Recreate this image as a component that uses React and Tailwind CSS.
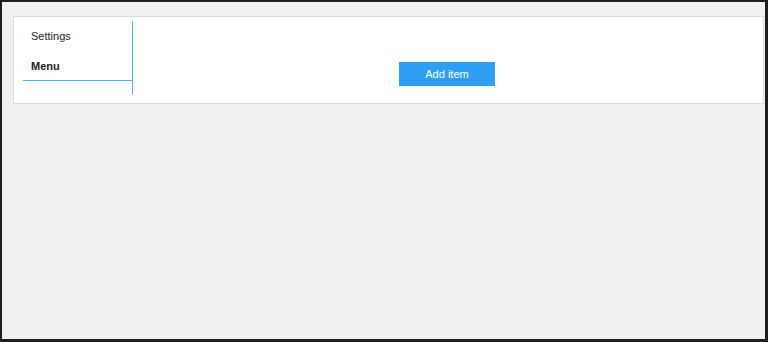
export default function App() {
  return (
    <div
      className="w-[768px] h-[342px] bg-[#f0f0f0] border-l-2 border-t-2 border-r-[3px] border-b-[3px] border-[#1e1e1e] pl-[11px] pt-[14px] pr-px text-[#222] text-[11px]"
      style={{ fontFamily: '"Liberation Sans", Arial, sans-serif' }}
    >
      {/* panel */}
      <div className="h-[88px] bg-white border border-[#dcdcdc] flex pl-[9px] pt-[4px]">
        {/* sidebar */}
        <div className="w-[110px] h-[73px] border-r border-[#4ab2ff] flex flex-col">
          <div className="h-[30px] pl-[8px] flex items-center pt-[1px]">Settings</div>
          <div className="h-[30px] pl-[8px] flex items-center pt-[2px] font-bold border-b border-[#4ab2ff]">Menu</div>
        </div>
        {/* content */}
        <div className="flex-1 flex justify-center pt-[41px] pr-[2px]">
          <button className="w-[96px] h-[24px] bg-[#2f9ff3] text-white text-[11px]">Add item</button>
        </div>
      </div>
    </div>
  );
}
